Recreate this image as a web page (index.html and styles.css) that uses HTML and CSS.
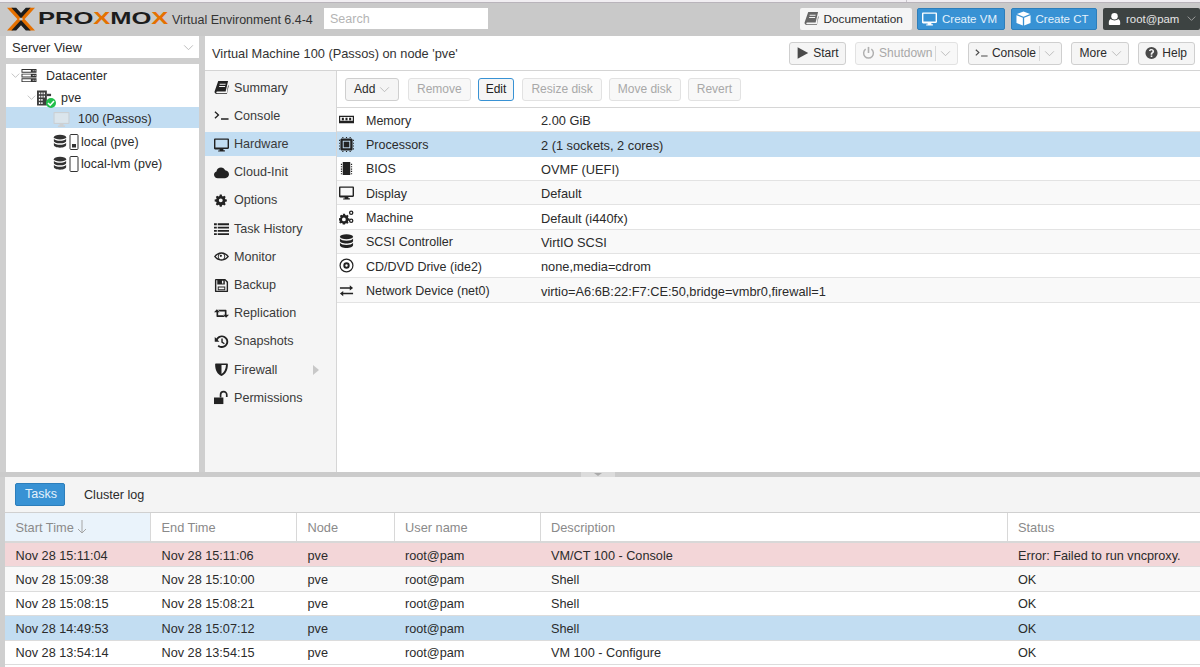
FILE: index.html
```html
<!DOCTYPE html>
<html lang="en">
<head>
<meta charset="utf-8">
<title>Proxmox Virtual Environment</title>
<link rel="stylesheet" href="styles.css">
</head>
<body>
<svg class="defs" width="0" height="0" aria-hidden="true">
<defs>
<symbol id="i-desktop" viewBox="0 0 16 16"><path fill-rule="evenodd" d="M1.200 1.500h13.600c.7 0 1.200.5 1.200 1.200v8.800c0 .7-.5 1.200-1.200 1.200H10v1.300h1.600v1.500H4.400V14.500H6v-1.300H1.200c-.7 0-1.200-.5-1.200-1.200V2.700c0-.7.500-1.200 1.200-1.200zM1.500 3v8.200h13V3z"/></symbol>
<symbol id="i-vm" viewBox="0 0 16 16"><path fill="#ccd0d3" fill-rule="evenodd" d="M1 1h14c.6 0 1 .4 1 1v10c0 .6-.4 1-1 1H10v1.500h1.600V16H4.400v-1.500H6V13H1c-.6 0-1-.4-1-1V2c0-.6.400-1 1-1zm.2 1.200v9.600h13.600V2.200z"/><path fill="#dbe5ec" d="M1.200 2.200h13.600v9.600H1.200z"/></symbol>
<symbol id="i-server" viewBox="0 0 16 16"><path fill-rule="evenodd" d="M0 1h16v4H0zM1 2v2h9V2zM12 2.500v1h1v-1zM14 2.500v1h1v-1zM0 6h16v4H0zM1 7v2h9V7zM12 7.500v1h1v-1zM14 7.500v1h1v-1zM0 11h16v4H0zM1 12v2h9v-2zM12 12.500v1h1v-1zM14 12.500v1h1v-1z"/></symbol>
<symbol id="i-db" viewBox="0 0 16 16"><ellipse cx="8" cy="3" rx="7" ry="2.700"/><path d="M1 4.800c1 1.600 3.800 2.300 7 2.300s6-.7 7-2.300v2.600c0 1.500-3.100 2.700-7 2.700S1 8.900 1 7.400zM1 9.400c1 1.600 3.800 2.300 7 2.300s6-.7 7-2.300V12c0 1.600-3.100 3-7 3s-7-1.400-7-3z"/></symbol>
<symbol id="i-book" viewBox="0 0 16 16"><path fill-rule="evenodd" d="M4.500 1H15l-2.600 11.200H3.600c-.8 0-1.200.4-1.200.9 0 .6.400.9 1.100.9h10.200L15 5.500l.7.600-2 8.900H3.200C1.500 15 .4 13.800.6 12.300zM6 4v1h6.200l.3-1zM5.500 6.500v1h6.200l.3-1z"/></symbol>
<symbol id="i-terminal" viewBox="0 0 16 16"><path d="M.5 4.500l1-1 4.300 4-4.300 4-1-1 3.200-3zM7.500 11h8v1.400h-8z"/></symbol>
<symbol id="i-cloud" viewBox="0 0 16 16"><path d="M4 14c-2.200 0-4-1.600-4-3.700 0-1.700 1-3 2.600-3.500C3 4.500 5 2.700 7.500 2.700c2 0 3.700 1.200 4.400 3 2.200.2 4.100 1.900 4.100 4.200 0 2.300-1.900 4.100-4.200 4.100z"/></symbol>
<symbol id="i-gear" viewBox="-1 -1 20 20"><path fill-rule="evenodd" d="M6.700 1h2.600l.4 2 1.300.6 1.800-1.100 1.800 1.800-1.100 1.800.6 1.300 2 .4v2.600l-2 .4-.6 1.300 1.100 1.800-1.800 1.800-1.800-1.100-1.300.6-.4 2H6.700l-.4-2-1.300-.6-1.800 1.100-1.800-1.800 1.100-1.800-.6-1.300-2-.4V7.800l2-.4.6-1.300-1.100-1.800 1.800-1.800 1.800 1.100 1.300-.6zM8 6.200a2.600 2.600 0 1 0 0 5.200 2.600 2.600 0 0 0 0-5.200z"/></symbol>
<symbol id="i-list" viewBox="0 0 16 16"><path d="M0 2.500h3v2H0zM4 2.500h12v2H4zM0 6h3v2H0zM4 6h12v2H4zM0 9.500h3v2H0zM4 9.500h12v2H4zM0 13h3v1.800H0zM4 13h12v1.800H4z"/></symbol>
<symbol id="i-eye" viewBox="0 0 16 16"><path fill-rule="evenodd" d="M8 3.500c3.600 0 6.500 2.300 8 4.500-1.500 2.200-4.400 4.500-8 4.500S1.500 10.200 0 8c1.500-2.200 4.400-4.500 8-4.500zM8 5a3 3 0 1 0 0 6 3 3 0 0 0 0-6zM1.800 8c.9 1 2 1.900 3.200 2.500C4.400 9.800 4 9 4 8s.4-1.800 1-2.500C3.800 6.100 2.700 7 1.800 8zM11 5.500c.6.700 1 1.500 1 2.500s-.4 1.800-1 2.500c1.200-.6 2.300-1.500 3.200-2.500-.9-1-2-1.900-3.200-2.500z"/><circle cx="7.300" cy="7.300" r="1.200"/></symbol>
<symbol id="i-save" viewBox="0 0 16 16"><path fill-rule="evenodd" d="M2 1h10l3 3v10c0 .6-.4 1-1 1H2c-.6 0-1-.4-1-1V2c0-.6.4-1 1-1zm.5 1.500v11h11V4.800L11.500 2.500V7h-8V2.500zM8.500 3H10v2.800H8.500zM4 9h8v4H4zm1 1v2h6v-2z"/></symbol>
<symbol id="i-retweet" viewBox="0 0 18 16"><path d="M3.500 3L7 6.500H5V10h6l2 2.200H3.800c-.6 0-.8-.3-.8-.8V6.500H0zM4.800 3.500h9.400c.5 0 .8.300.8.800V9.500h3L14.500 13 11 9.500h2V5.700H7z"/></symbol>
<symbol id="i-history" viewBox="0 0 16 16"><path d="M8.500 1.500a6.700 6.700 0 1 1-4.700 11.500l1.300-1.400a4.800 4.800 0 1 0-1.200-5.200L5.800 8.300H.8V3.300l1.700 1.600A6.700 6.700 0 0 1 8.500 1.500z"/><path d="M7.800 4.800h1.500v3.500l2.200 1.500-.8 1.200-2.900-2z"/></symbol>
<symbol id="i-shield" viewBox="0 0 16 16"><path fill-rule="evenodd" d="M2 1.500h12c.5 0 .8.300.8.800 0 6.500-2.500 10.700-6.800 12.700C3.700 13 1.200 8.800 1.200 2.300c0-.5.300-.8.800-.8zM8 3.300v9.500c2.800-1.700 4.500-4.600 4.800-9.500z"/></symbol>
<symbol id="i-unlock" viewBox="0 0 16 16"><path d="M0 8h10v7H0z"/><path fill="none" stroke="currentColor" stroke-width="1.800" d="M7 8V5a3.300 3.300 0 0 1 6.600 0v2.500"/></symbol>
<symbol id="i-memory" viewBox="0 0 16 16"><path fill-rule="evenodd" d="M0 4h16v8H0zM1.300 5.300v4.100h13.400V5.300zM3 6h2.200v2.800H3zM6.900 6h2.200v2.800H6.900zM10.800 6H13v2.800h-2.200z"/></symbol>
<symbol id="i-chip" viewBox="0 0 16 16"><path fill-rule="evenodd" d="M3 1.500h10c.8 0 1.500.7 1.500 1.500v10c0 .8-.7 1.500-1.500 1.500H3c-.8 0-1.500-.7-1.500-1.500V3c0-.8.700-1.500 1.500-1.500zM4 4v8h8V4z"/><path d="M0 3h1v1.200H0zM0 6h1v1.200H0zM0 9h1v1.200H0zM0 12h1v1.200H0zM15 3h1v1.200h-1zM15 6h1v1.200h-1zM15 9h1v1.200h-1zM15 12h1v1.200h-1zM3.500 0h1.200v1H3.500zM7.400 0h1.200v1H7.400zM11.300 0h1.200v1h-1.200zM3.500 15h1.200v1H3.500zM7.400 15h1.200v1H7.400zM11.300 15h1.200v1h-1.200z"/><path d="M5 5h6v6H5z"/></symbol>
<symbol id="i-bios" viewBox="0 0 16 16"><path d="M4 1h8v14H4zM2 3h1.300v1.200H2zM2 5.500h1.300v1.200H2zM2 8h1.300v1.200H2zM2 10.500h1.300v1.200H2zM2 13h1.300v1H2zM12.700 3H14v1.200h-1.300zM12.700 5.500H14v1.200h-1.300zM12.700 8H14v1.200h-1.300zM12.700 10.500H14v1.200h-1.300zM12.700 13H14v1h-1.300z"/></symbol>
<symbol id="i-gears" viewBox="0 1 16 15"><path fill-rule="evenodd" d="M4 4.500h2.400l.3 1.300 1.100.5 1.100-.7 1.300 1.300-.7 1.300.4 1 1.300.4v2l-1.300.3-.4 1.100.7 1.100-1.300 1-1.100-.6-1.100.4-.3 1H4l-.3-1.200-1.100-.4-1.100.7-1.300-1.200.7-1.200-.5-1L0 11.400v-2l1.200-.3.5-1-.7-1.300L2.300 5.500l1.200.7 1-.5zM5.200 8.500a2 2 0 1 0 0 4 2 2 0 0 0 0-4z"/><path fill-rule="evenodd" d="M13 1a2.400 2.400 0 1 1 0 4.800A2.400 2.400 0 0 1 13 1zm0 1.400a1 1 0 1 0 0 2 1 1 0 0 0 0-2zM13 9.500a2.400 2.400 0 1 1 0 4.800 2.400 2.400 0 0 1 0-4.800zm0 1.400a1 1 0 1 0 0 2 1 1 0 0 0 0-2z"/></symbol>
<symbol id="i-disc" viewBox="0 0 16 16"><path fill-rule="evenodd" d="M8 .5a7.500 7.500 0 1 1 0 15 7.500 7.500 0 0 1 0-15zm0 1.300a6.200 6.200 0 1 0 0 12.400A6.200 6.200 0 0 0 8 1.800zM8 4.600a3.400 3.400 0 1 1 0 6.800 3.400 3.400 0 0 1 0-6.800zm0 2.100a1.300 1.300 0 1 0 0 2.600 1.300 1.300 0 0 0 0-2.600z"/></symbol>
<symbol id="i-exchange" viewBox="0 0 16 16"><path d="M1 4.500h10.500V2.500L15 5.300 11.500 8V6H1zM15 10.500H4.500V8.500L1 11.300 4.500 14v-2H15z"/></symbol>
<symbol id="i-play" viewBox="0 0 16 16"><path d="M2 1l13 7-13 7z"/></symbol>
<symbol id="i-power" viewBox="0 0 16 16"><path d="M7 .5h2v7.500H7z"/><path fill="none" stroke="currentColor" stroke-width="1.800" d="M4.500 3.300a6 6 0 1 0 7 0"/></symbol>
<symbol id="i-help" viewBox="0 0 16 16"><path fill-rule="evenodd" d="M8 .5a7.500 7.500 0 1 1 0 15 7.500 7.500 0 0 1 0-15zM7 11v2h2v-2zM8 3C6.400 3 5.200 3.800 4.800 5.300l1.700.5c.2-.7.700-1.100 1.400-1.100.8 0 1.300.4 1.300 1 0 .5-.3.800-1 1.300-.8.500-1.200 1-1.200 2V10h2v-.6c0-.5.200-.7.900-1.200.8-.6 1.300-1.200 1.300-2.200C11.200 4.200 9.900 3 8 3z"/></symbol>
<symbol id="i-cube" viewBox="0 0 16 16"><path d="M8 .5l7 2.800L8 6 1 3.300zM.5 4.500L7.300 7.200V15.500L.5 12.700zM15.500 4.500V12.700L8.700 15.500V7.200z"/></symbol>
<symbol id="i-user" viewBox="0 0 16 16"><circle cx="8" cy="4.500" r="4"/><path d="M3.500 8c1 1.200 2.800 1.800 4.500 1.800S11.500 9.200 12.500 8c1.500.4 2.500 2 2.500 4.500V14c0 .8-.6 1.300-1.300 1.300H2.300C1.600 15.300 1 14.800 1 14v-1.500C1 10 2 8.400 3.500 8z"/></symbol>
<symbol id="i-chev" viewBox="0 0 12 8"><path fill="none" stroke="currentColor" stroke-width="1" d="M1 1.500l5 5 5-5"/></symbol>
<symbol id="i-phone" viewBox="0 0 10 16"><rect x="1" y=".5" width="8" height="15" rx="1" fill="#fff" stroke="currentColor"/></symbol>
<symbol id="i-phonefull" viewBox="0 0 10 16"><rect x="1" y=".5" width="8" height="15" rx="1" fill="#fff" stroke="currentColor"/><rect x="3" y="10" width="4" height="3.500"/></symbol>
<symbol id="i-node" viewBox="0 0 16 16"><path fill-rule="evenodd" d="M0 0h10.500v16H0zM2 2v2h1.500V2zM4.500 2v2H6V2zM7 2v2h1.500V2zM2 5.500v2h1.500v-2zM4.500 5.500v2H6v-2zM7 5.500v2h1.500v-2zM2 9v2h1.500V9zM4.500 9v2H6V9zM2 12.500v2h1.500v-2zM4.500 12.500v2H6v-2z"/><path d="M10.500 3.500H15V6h-4.500z"/></symbol>
</defs>
</svg>

<div class="top-strip"><span class="strip-a"></span><span class="strip-b"></span></div>

<header class="app-head">
  <div class="logo">
    <svg class="logo-x" viewBox="0 0 32 26"><path fill="#e57000" d="M0 0h6.500L16 10.500 12.800 14zM0 26L12.800 12 16 15.500 6.500 26zM32 0h-6.500L16 10.500l3.200 3.500zM32 26L19.200 12 16 15.500 25.500 26z"/><path fill="#1c1c1c" d="M5 0h5.500L16 6l5.500-6H27L16 12zM5 26h5.500L16 20l5.500 6H27L16 14z"/></svg>
    <span class="logo-word"><span class="logo-text">PRO<b>X</b>MO<b>X</b></span></span>
  </div>
  <span class="version">Virtual Environment 6.4-4</span>
  <div class="search">Search</div>
  <div class="head-right">
    <span class="hbtn hbtn-light"><svg class="ic ic-doc"><use href="#i-book"/></svg>Documentation</span>
    <span class="hbtn hbtn-blue hbtn-vm"><svg class="ic"><use href="#i-desktop"/></svg>Create VM</span>
    <span class="hbtn hbtn-blue hbtn-ct"><svg class="ic"><use href="#i-cube"/></svg>Create CT</span>
    <span class="hbtn hbtn-dark"><svg class="ic"><use href="#i-user"/></svg>root@pam<svg class="chev"><use href="#i-chev"/></svg></span>
  </div>
</header>

<div class="workspace">
  <aside class="side">
    <div class="view-select"><span>Server View</span><svg class="chev"><use href="#i-chev"/></svg></div>
    <div class="tree">
      <div class="tree-row lvl0"><svg class="chev tw"><use href="#i-chev"/></svg><svg class="ic tic"><use href="#i-server"/></svg><span class="tl-dc">Datacenter</span></div>
      <div class="tree-row lvl1"><svg class="chev tw"><use href="#i-chev"/></svg><span class="node-ic"><svg class="ic tic"><use href="#i-node"/></svg><span class="ok-badge"><svg viewBox="0 0 10 10"><path fill="none" stroke="#fff" stroke-width="1.600" d="M2 5l2.200 2.200L8 3"/></svg></span></span><span>pve</span></div>
      <div class="tree-row lvl2 selected"><svg class="ic vm-ic"><use href="#i-vm"/></svg><span>100 (Passos)</span></div>
      <div class="tree-row lvl3"><svg class="ic tic"><use href="#i-db"/></svg><svg class="ic ph"><use href="#i-phonefull"/></svg><span>local (pve)</span></div>
      <div class="tree-row lvl3"><svg class="ic tic"><use href="#i-db"/></svg><svg class="ic ph"><use href="#i-phone"/></svg><span>local-lvm (pve)</span></div>
    </div>
  </aside>

  <main class="content">
    <div class="title-bar">
      <span class="title">Virtual Machine 100 (Passos) on node 'pve'</span>
      <div class="title-actions">
        <span class="btn"><svg class="ic"><use href="#i-play"/></svg>Start</span>
        <span class="btn off"><svg class="ic"><use href="#i-power"/></svg>Shutdown<i class="sep"></i><svg class="chev"><use href="#i-chev"/></svg></span>
        <span class="btn"><svg class="ic"><use href="#i-terminal"/></svg>Console<i class="sep"></i><svg class="chev"><use href="#i-chev"/></svg></span>
        <span class="btn btn-more">More<svg class="chev"><use href="#i-chev"/></svg></span>
        <span class="btn btn-help"><svg class="ic"><use href="#i-help"/></svg>Help</span>
      </div>
    </div>
    <div class="panel">
      <nav class="nav">
        <div class="nav-item"><svg class="ic"><use href="#i-book"/></svg>Summary</div>
        <div class="nav-item"><svg class="ic"><use href="#i-terminal"/></svg>Console</div>
        <div class="nav-item active"><svg class="ic"><use href="#i-desktop"/></svg>Hardware</div>
        <div class="nav-item"><svg class="ic"><use href="#i-cloud"/></svg>Cloud-Init</div>
        <div class="nav-item"><svg class="ic"><use href="#i-gear"/></svg>Options</div>
        <div class="nav-item"><svg class="ic"><use href="#i-list"/></svg>Task History</div>
        <div class="nav-item"><svg class="ic"><use href="#i-eye"/></svg>Monitor</div>
        <div class="nav-item"><svg class="ic"><use href="#i-save"/></svg>Backup</div>
        <div class="nav-item"><svg class="ic"><use href="#i-retweet"/></svg>Replication</div>
        <div class="nav-item"><svg class="ic"><use href="#i-history"/></svg>Snapshots</div>
        <div class="nav-item"><svg class="ic"><use href="#i-shield"/></svg>Firewall<span class="arrow"></span></div>
        <div class="nav-item"><svg class="ic"><use href="#i-unlock"/></svg>Permissions</div>
      </nav>
      <section class="hw">
        <div class="hw-bar">
          <span class="btn b-add">Add<svg class="chev"><use href="#i-chev"/></svg></span>
          <span class="btn off">Remove</span>
          <span class="btn focus">Edit</span>
          <span class="btn off">Resize disk</span>
          <span class="btn off">Move disk</span>
          <span class="btn off">Revert</span>
        </div>
        <div class="hw-rows">
          <div class="hw-row"><svg class="ic"><use href="#i-memory"/></svg><span class="hw-name">Memory</span><span class="hw-val">2.00 GiB</span></div>
          <div class="hw-row selected"><svg class="ic"><use href="#i-chip"/></svg><span class="hw-name">Processors</span><span class="hw-val">2 (1 sockets, 2 cores)</span></div>
          <div class="hw-row"><svg class="ic"><use href="#i-bios"/></svg><span class="hw-name">BIOS</span><span class="hw-val">OVMF (UEFI)</span></div>
          <div class="hw-row alt"><svg class="ic"><use href="#i-desktop"/></svg><span class="hw-name">Display</span><span class="hw-val">Default</span></div>
          <div class="hw-row"><svg class="ic"><use href="#i-gears"/></svg><span class="hw-name">Machine</span><span class="hw-val">Default (i440fx)</span></div>
          <div class="hw-row alt"><svg class="ic"><use href="#i-db"/></svg><span class="hw-name">SCSI Controller</span><span class="hw-val">VirtIO SCSI</span></div>
          <div class="hw-row"><svg class="ic"><use href="#i-disc"/></svg><span class="hw-name">CD/DVD Drive (ide2)</span><span class="hw-val">none,media=cdrom</span></div>
          <div class="hw-row alt"><svg class="ic"><use href="#i-exchange"/></svg><span class="hw-name">Network Device (net0)</span><span class="hw-val">virtio=A6:6B:22:F7:CE:50,bridge=vmbr0,firewall=1</span></div>
        </div>
      </section>
    </div>
  </main>
</div>

<div class="splitter"><span class="collapse"></span></div>

<section class="log">
  <div class="log-tabs"><span class="tab active">Tasks</span><span class="tab">Cluster log</span></div>
  <div class="log-row log-head">
    <span class="sorted">Start Time<svg class="sort" viewBox="0 0 10 14"><path fill="none" stroke="currentColor" d="M5 0v13M1 9l4 4 4-4"/></svg></span><span>End Time</span><span>Node</span><span>User name</span><span>Description</span><span>Status</span>
  </div>
  <div class="log-row err"><span>Nov 28 15:11:04</span><span>Nov 28 15:11:06</span><span>pve</span><span>root@pam</span><span>VM/CT 100 - Console</span><span>Error: Failed to run vncproxy.</span></div>
  <div class="log-row alt"><span>Nov 28 15:09:38</span><span>Nov 28 15:10:00</span><span>pve</span><span>root@pam</span><span>Shell</span><span>OK</span></div>
  <div class="log-row"><span>Nov 28 15:08:15</span><span>Nov 28 15:08:21</span><span>pve</span><span>root@pam</span><span>Shell</span><span>OK</span></div>
  <div class="log-row selected"><span>Nov 28 14:49:53</span><span>Nov 28 15:07:12</span><span>pve</span><span>root@pam</span><span>Shell</span><span>OK</span></div>
  <div class="log-row"><span>Nov 28 13:54:14</span><span>Nov 28 13:54:15</span><span>pve</span><span>root@pam</span><span>VM 100 - Configure</span><span>OK</span></div>
</section>
</body>
</html>
```

FILE: styles.css
```css
* { box-sizing: border-box; }
html, body { margin: 0; height: 667px; overflow: hidden; }
body {
  font-family: "Liberation Sans", Arial, sans-serif;
  font-size: 12.5px;
  color: #2b2b2b;
  background: #cfcfcf;
  display: flex;
  flex-direction: column;
}
.defs { position: absolute; }
.ic { width: 15px; height: 15px; fill: currentColor; flex: none; }
.chev { width: 11px; height: 7px; color: #b5b5b5; flex: none; }

.top-strip { height: 3px; display: flex; background: #f1eef2; border-bottom: 1px solid #b9b4bb; flex: none; }
.strip-a { width: 907px; border-right: 1px solid #c8c4ca; }
.strip-b { flex: 1; }

.app-head { height: 33px; flex: none; display: flex; align-items: center; padding: 0 0 2px 7px; background: #c9c9c9; }
.logo { display: flex; align-items: center; width: 165px; }
.logo-x { width: 28px; height: 24px; flex: none; }
.logo-word { display: block; width: 131px; margin-left: 3px; }
.logo-text { display: inline-block; font-size: 17px; font-weight: bold; line-height: 20px; color: #1c1c1c; transform: scaleX(1.5); transform-origin: left center; white-space: nowrap; }
.logo-text b { color: #e57000; }
.version { width: 152px; color: #333; margin-top: 3px; }
.search { width: 164px; height: 21px; background: #fff; color: #b4b4b4; padding: 4px 6px 0; line-height: 15px; }
.head-right { margin-left: auto; display: flex; gap: 5.5px; font-size: 11.8px; }
.hbtn { height: 22px; display: flex; align-items: center; gap: 6px; border-radius: 2px; white-space: nowrap; }
.hbtn-light { width: 112px; background: #f5f5f5; padding-left: 4px; gap: 5px; }
.ic-doc { color: #666; }
.hbtn-blue { background: #3892d4; color: #e4f1fb; border: 1px solid #2c7ebb; padding-left: 4px; gap: 5px; font-size: 11.5px; }
.hbtn-blue .ic { color: #fff; }
.hbtn-vm { width: 88px; }
.hbtn-ct { width: 86px; }
.hbtn-dark { width: 97px; margin-left: 1px; background: #3d4342; color: #e6e6e6; padding-left: 5px; gap: 5px; font-size: 11.4px; }
.hbtn-dark .ic { color: #fff; width: 13px; height: 14px; }
.hbtn-dark .chev { color: #bbb; width: 9px; margin-left: 3px; }

.workspace { height: 436px; flex: none; display: flex; padding-left: 6px; gap: 6.5px; }
.side { width: 192.5px; display: flex; flex-direction: column; gap: 6px; }
.view-select { height: 22px; background: #fff; display: flex; align-items: center; justify-content: space-between; padding: 0 5px 0 6px; font-size: 13px; }
.tree { flex: 1; background: #fff; }
.tree-row { height: 22px; display: flex; align-items: center; padding-top: 1px; white-space: nowrap; }
.tree-row.selected { background: #c2ddf2; height: 21px; margin: -1px 0 2px; padding-top: 2px; }
.tw { color: #b0b0b0; width: 9px; }
.lvl0 { padding-left: 5px; }
.lvl0 .tw { margin-right: 1px; }
.lvl0 .tic { width: 16px; height: 15px; margin-right: 9px; color: #333; }
.lvl1 { padding-left: 21px; }
.lvl1 .tw { margin-right: 1px; }
.node-ic { position: relative; display: flex; margin-right: 6px; width: 18px; }
.node-ic .tic { width: 15px; height: 16px; color: #3e3e3e; }
.ok-badge { position: absolute; right: -1px; bottom: -2px; width: 10px; height: 10px; border-radius: 50%; background: #21bf4b; display: flex; }
.lvl2 { padding-left: 47px; }
.vm-ic { width: 17px; height: 16px; margin-right: 8px; }
.lvl3 { padding-left: 47px; }
.lvl3 .tic { width: 14px; height: 15px; color: #333; margin-right: 2px; }
.lvl3 .ph { width: 10px; height: 16px; color: #333; margin-right: 2px; }

.content { flex: 1; min-width: 0; display: flex; flex-direction: column; }
.title-bar { height: 35px; flex: none; background: #fff; border-bottom: 1px solid #d4d4d4; display: flex; align-items: center; padding: 0 5px 0 7px; font-size: 12.8px; }
.title { color: #333; }
.title-actions { margin-left: auto; display: flex; gap: 9.5px; font-size: 12px; }
.btn { height: 23px; display: inline-flex; align-items: center; gap: 4px; padding: 0 6px; background: #f5f5f5; border: 1px solid #cfcfcf; border-radius: 3px; white-space: nowrap; color: #2b2b2b; font-size: 12px; }
.btn.off { color: #a8a8a8; background: #f8f8f8; border-color: #e2e2e2; }
.btn.focus { background: #f5f5f5; border-color: #3892d4; color: #222; }
.sep { width: 1px; height: 15px; margin-left: -1px; background: #d8d8d8; }
.title-actions .ic { color: #4a4a4a; width: 13px; height: 14px; }
.title-actions .off .ic { color: #b0b0b0; }
.btn-more { padding-left: 7px; }
.btn-help { padding-right: 7px; }

.panel { flex: 1; display: flex; min-height: 0; }
.nav { width: 132px; flex: none; background: #f5f5f5; border-right: 1px solid #d6d6d6; padding-top: 5px; display: flex; flex-direction: column; gap: 4.8px; }
.nav-item { height: 23.4px; display: flex; align-items: center; padding-left: 9px; gap: 5px; color: #3a3a3a; font-size: 12.6px; }
.nav-item .ic { width: 15px; height: 15px; color: #222; }
.nav-item.active { background: #c2ddf2; }
.arrow { margin-left: auto; margin-right: 17px; border-left: 6px solid #c8c8c8; border-top: 5px solid transparent; border-bottom: 5px solid transparent; }

.hw { flex: 1; min-width: 0; background: #fff; }
.hw-bar { height: 37px; display: flex; align-items: center; gap: 7px; padding-left: 8px; border-bottom: 1px solid #d6d6d6; background: #fff; }
.hw-bar .btn { padding: 0 8px; }
.hw-bar .b-add { width: 54px; margin-right: 2px; }
.hw-bar .focus { padding: 0 7px; margin-right: 1px; }
.hw-rows { display: flex; flex-direction: column; }
.hw-row { height: 24.35px; display: grid; grid-template-columns: 15px 163px 1fr; column-gap: 12px; align-items: center; padding: 2px 0 0 2px; border-bottom: 1px solid #e3e3e3; }
.hw-row .ic { width: 15px; height: 15px; color: #222; margin-top: -2px; }
.hw-val { font-size: 12.8px; }
.hw-row.alt { background: #f9f9f9; }
.hw-row.selected { background: #c2ddf2; border-bottom-color: #c2ddf2; }

.splitter { height: 5px; flex: none; position: relative; background: #cbcbcb; }
.collapse { position: absolute; left: 581px; top: 0; width: 34px; height: 5px; background: #dcdcdc; }
.collapse::after { content: ""; position: absolute; left: 13px; top: 1px; border-top: 3px solid #aaa; border-left: 4px solid transparent; border-right: 4px solid transparent; }

.log { flex: 1; margin-left: 5px; background: #fff; min-height: 0; }
.log-tabs { height: 36px; background: #f4f4f4; border-bottom: 1px solid #d0d0d0; display: flex; align-items: center; padding: 0 0 1px 10px; gap: 10px; }
.tab { height: 23px; display: flex; align-items: center; padding: 2px 9px 0; color: #2b2b2b; font-size: 12.6px; }
.tab.active { background: #3892d4; border: 1px solid #2c7ebb; border-radius: 2px; color: #e4f1fb; width: 50px; font-size: 12.5px; padding-top: 0; }
.log-row { height: 24.4px; display: grid; grid-template-columns: 146px 146px 97.5px 146px 467px 1fr; align-items: center; padding-top: 2px; border-bottom: 1px solid #dcdcdc; font-size: 12.7px; }
.log-row > span { padding-left: 10.5px; white-space: nowrap; overflow: hidden; }
.log-head { height: 30px; padding-top: 0; color: #8a8a8a; background: #fff; border-bottom: 2px solid #d8d8d8; font-size: 12.8px; }
.log-head > span { height: 100%; display: flex; align-items: center; gap: 3px; border-right: 1px solid #d8d8d8; }
.log-head > span:last-child { border-right: 0; }
.log-head .sorted { background: #eaf3fb; }
.sort { width: 10px; height: 14px; color: #a5a5a5; }
.log-row.err { background: #f3d6d8; }
.log-row.alt { background: #f9f9f9; }
.log-row.selected { background: #c2ddf2; }
```
